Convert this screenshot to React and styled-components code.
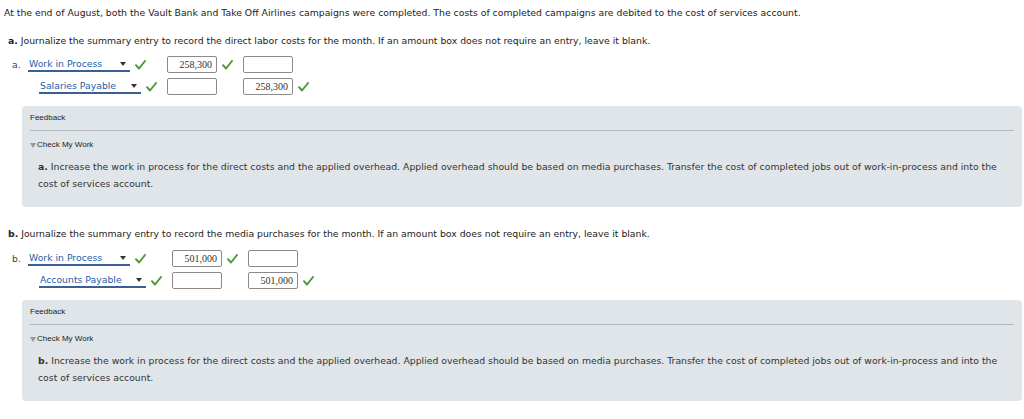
import React from "react";
import styled, { createGlobalStyle } from "styled-components";

const GlobalStyle = createGlobalStyle`
  body {
    margin: 0;
    background: #fff;
    font-family: Verdana, "DejaVu Sans", sans-serif;
    font-size: 9.3px;
    color: #222;
  }
`;

const Page = styled.div`
  padding: 6px 2px 0 4px;
`;

const Intro = styled.p`
  margin: 0;
  line-height: 14px;
`;

const Question = styled.p`
  margin: ${(p) => p.$top}px 0 0 4px;
  line-height: 14px;
`;

const Entry = styled.div`
  display: grid;
  grid-template-columns: auto auto auto;
  justify-content: start;
  row-gap: 5px;
  margin: ${(p) => p.$top}px 0 0 8px;
`;

const AccountCell = styled.div`
  display: flex;
  align-items: center;
  height: 17px;
  padding-left: ${(p) => (p.$indent ? 27 : 0)}px;
  padding-right: 10px;
`;

const Letter = styled.span`
  width: 16px;
  color: #444;
`;

const Select = styled.span`
  display: flex;
  align-items: center;
  justify-content: space-between;
  width: ${(p) => p.$w}px;
  box-sizing: border-box;
  padding: 0 4px 0 1px;
  color: #2560aa;
  border-bottom: 2px solid #3a5f92;
  line-height: 13px;
  margin-right: 5px;
  &::after {
    content: "";
    border-left: 3.5px solid transparent;
    border-right: 3.5px solid transparent;
    border-top: 4px solid #333;
  }
`;

const AmountCell = styled.div`
  display: flex;
  align-items: center;
  height: 17px;
  padding-right: 10px;
`;

const Amount = styled.div`
  width: 50px;
  height: 17px;
  box-sizing: border-box;
  border: 1px solid #8a8a8a;
  border-radius: 2px;
  background: #fff;
  font-family: "Liberation Serif", serif;
  font-size: 10px;
  line-height: 15px;
  text-align: right;
  padding-right: 4px;
  color: #333;
  margin-right: 5px;
`;

const Spacer = styled.span`
  width: 11px;
`;

const Check = () => (
  <svg width="11" height="10" viewBox="0 0 11 10">
    <path
      d="M1 5.2 L4 8.5 L10 1"
      fill="none"
      stroke="#4c9a35"
      strokeWidth="2"
      strokeLinecap="round"
      strokeLinejoin="round"
    />
  </svg>
);

const Feedback = styled.div`
  margin: ${(p) => p.$top}px 0 0 18px;
  background: #e0e5e9;
  border-radius: 4px;
  padding: 6px 8px 15px 8px;
`;

const FeedbackTitle = styled.div`
  font-family: "Liberation Sans", Arial, sans-serif;
  font-size: 8px;
  line-height: 12px;
  color: #222;
  padding-bottom: 6px;
  border-bottom: 1px solid #b5babe;
`;

const CheckWork = styled.div`
  font-family: "Liberation Sans", Arial, sans-serif;
  font-size: 8px;
  line-height: 12px;
  margin-top: 8px;
  display: flex;
  align-items: center;
  gap: 1px;
  &::before {
    content: "";
    border-left: 3px solid transparent;
    border-right: 3px solid transparent;
    border-top: 5px solid #999;
  }
`;

const Explain = styled.p`
  margin: 7px 0 0 8px;
  padding-right: 12px;
  line-height: 17px;
  color: #333;
`;

const Entries = ({ letter, rows, top }) => (
  <Entry $top={top}>
    {rows.map((r, i) => (
      <React.Fragment key={i}>
        <AccountCell $indent={i > 0}>
          {i === 0 && <Letter>{letter}.</Letter>}
          <Select $w={r.w}>{r.account}</Select>
          <Check />
        </AccountCell>
        <AmountCell>
          <Amount>{r.debit}</Amount>
          {r.debit ? <Check /> : <Spacer />}
        </AmountCell>
        <AmountCell>
          <Amount>{r.credit}</Amount>
          {r.credit ? <Check /> : <Spacer />}
        </AmountCell>
      </React.Fragment>
    ))}
  </Entry>
);

const FeedbackBox = ({ letter, top }) => (
  <Feedback $top={top}>
    <FeedbackTitle>Feedback</FeedbackTitle>
    <CheckWork>Check My Work</CheckWork>
    <Explain>
      <b>{letter}.</b> Increase the work in process for the direct costs and
      the applied overhead. Applied overhead should be based on media
      purchases. Transfer the cost of completed jobs out of work-in-process
      and into the cost of services account.
    </Explain>
  </Feedback>
);

export default function App() {
  return (
    <Page>
      <GlobalStyle />
      <Intro>
        At the end of August, both the Vault Bank and Take Off Airlines
        campaigns were completed. The costs of completed campaigns are debited
        to the cost of services account.
      </Intro>
      <Question $top={14}>
        <b>a.</b> Journalize the summary entry to record the direct labor costs
        for the month. If an amount box does not require an entry, leave it
        blank.
      </Question>
      <Entries
        letter="a"
        top={8}
        rows={[
          { account: "Work in Process", w: 102, debit: "258,300", credit: "" },
          { account: "Salaries Payable", w: 102, debit: "", credit: "258,300" },
        ]}
      />
      <FeedbackBox letter="a" top={11} />
      <Question $top={20}>
        <b>b.</b> Journalize the summary entry to record the media purchases
        for the month. If an amount box does not require an entry, leave it
        blank.
      </Question>
      <Entries
        letter="b"
        top={9}
        rows={[
          { account: "Work in Process", w: 102, debit: "501,000", credit: "" },
          { account: "Accounts Payable", w: 107, debit: "", credit: "501,000" },
        ]}
      />
      <FeedbackBox letter="b" top={11} />
    </Page>
  );
}
